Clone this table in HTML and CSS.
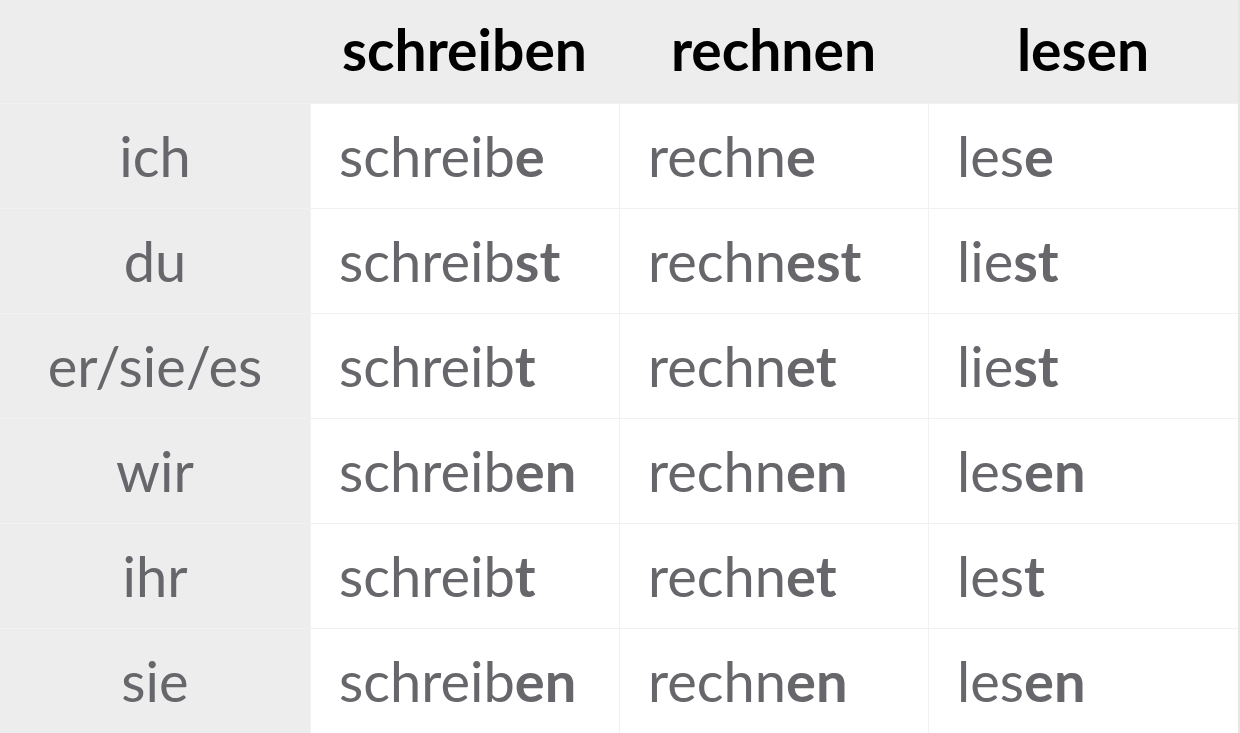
FILE: index.html
```html
<!DOCTYPE html>
<html lang="de">
<head>
<meta charset="utf-8">
<title>Konjugation</title>
<link rel="stylesheet" href="styles.css">
</head>
<body>
<div class="table">
  <div class="cell head corner"></div>
  <div class="cell head">schreiben</div>
  <div class="cell head">rechnen</div>
  <div class="cell head">lesen</div>

  <div class="cell pron">ich</div>
  <div class="cell data">schreib<b>e</b></div>
  <div class="cell data">rechn<b>e</b></div>
  <div class="cell data">les<b>e</b></div>

  <div class="cell pron">du</div>
  <div class="cell data">schreib<b>st</b></div>
  <div class="cell data">rechn<b>est</b></div>
  <div class="cell data">lie<b>st</b></div>

  <div class="cell pron">er/sie/es</div>
  <div class="cell data">schreib<b>t</b></div>
  <div class="cell data">rechn<b>et</b></div>
  <div class="cell data">lie<b>st</b></div>

  <div class="cell pron">wir</div>
  <div class="cell data">schreib<b>en</b></div>
  <div class="cell data">rechn<b>en</b></div>
  <div class="cell data">les<b>en</b></div>

  <div class="cell pron">ihr</div>
  <div class="cell data">schreib<b>t</b></div>
  <div class="cell data">rechn<b>et</b></div>
  <div class="cell data">les<b>t</b></div>

  <div class="cell pron">sie</div>
  <div class="cell data">schreib<b>en</b></div>
  <div class="cell data">rechn<b>en</b></div>
  <div class="cell data">les<b>en</b></div>
</div>
</body>
</html>
```
FILE: styles.css
```css
html, body {
  margin: 0;
  padding: 0;
  background: #ffffff;
}
.table {
  display: grid;
  grid-template-columns: 310px 309px 309px 310px;
  grid-template-rows: 103px repeat(6, 105px);
  width: 1238px;
  border-right: 2px solid #e6e6e6;
  font-family: Lato, "Open Sans", "Liberation Sans", sans-serif;
  font-size: 56px;
  color: #67666b;
}
.cell {
  display: flex;
  align-items: center;
  box-sizing: border-box;
  line-height: 1;
}
.head {
  background: #ededed;
  color: #000000;
  font-weight: 700;
  font-size: 57px;
  justify-content: center;
  padding-bottom: 4px;
}
.pron {
  background: #ededed;
  justify-content: center;
  border-top: 1px solid #f2f2f2;
}
.data {
  background: #ffffff;
  padding-left: 28px;
  border-top: 1px solid #f1f1f1;
  border-left: 1px solid #f1f1f1;
}
.data b {
  font-weight: 700;
}
```
